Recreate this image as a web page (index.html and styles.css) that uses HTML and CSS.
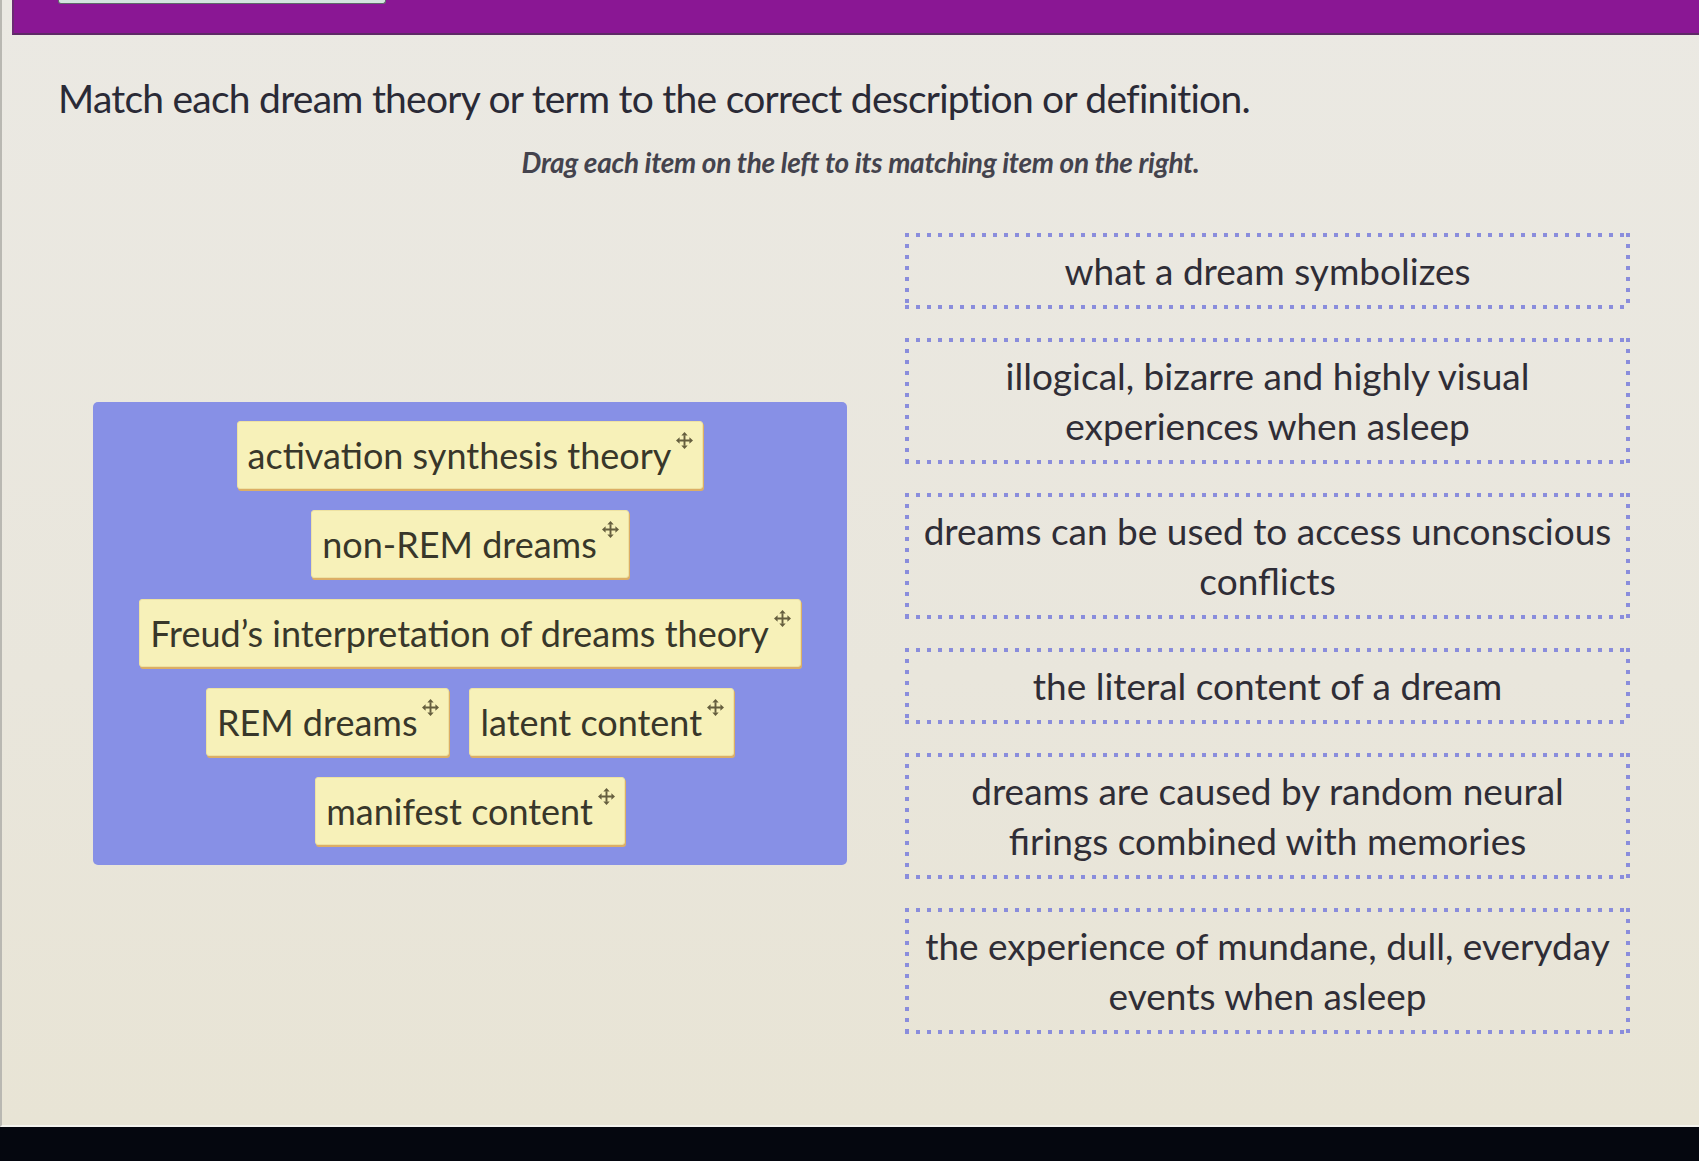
FILE: index.html
```html
<!DOCTYPE html>
<html lang="en">
<head>
    <meta charset="UTF-8" />
    <meta name="viewport" content="width=device-width, initial-scale=1.0" />
    <title>Dream Theories - Matching</title>
    <link rel="stylesheet" href="styles.css">
</head>
<body>
    <div class="screen">
        <header class="topbar"><span class="tab"></span></header>

        <main class="question">
            <h1 class="prompt">Match each dream theory or term to the correct description or definition.</h1>
            <p class="hint">Drag each item on the left to its matching item on the right.</p>

            <div class="matching">
                <div class="bank">
                    <div class="chip">activation synthesis theory<svg class="grip" viewBox="0 0 16 16"><path d="M8 3v10M3 8h10"/><path class="head" d="M8 0l3 3.4H5zM8 16l3-3.4H5zM0 8l3.4-3v6zM16 8l-3.4-3v6z"/></svg></div>
                    <div class="chip">non-REM dreams<svg class="grip" viewBox="0 0 16 16"><path d="M8 3v10M3 8h10"/><path class="head" d="M8 0l3 3.4H5zM8 16l3-3.4H5zM0 8l3.4-3v6zM16 8l-3.4-3v6z"/></svg></div>
                    <div class="chip">Freud’s interpretation of dreams theory<svg class="grip" viewBox="0 0 16 16"><path d="M8 3v10M3 8h10"/><path class="head" d="M8 0l3 3.4H5zM8 16l3-3.4H5zM0 8l3.4-3v6zM16 8l-3.4-3v6z"/></svg></div>
                    <div class="chip">REM dreams<svg class="grip" viewBox="0 0 16 16"><path d="M8 3v10M3 8h10"/><path class="head" d="M8 0l3 3.4H5zM8 16l3-3.4H5zM0 8l3.4-3v6zM16 8l-3.4-3v6z"/></svg></div>
                    <div class="chip">latent content<svg class="grip" viewBox="0 0 16 16"><path d="M8 3v10M3 8h10"/><path class="head" d="M8 0l3 3.4H5zM8 16l3-3.4H5zM0 8l3.4-3v6zM16 8l-3.4-3v6z"/></svg></div>
                    <div class="chip">manifest content<svg class="grip" viewBox="0 0 16 16"><path d="M8 3v10M3 8h10"/><path class="head" d="M8 0l3 3.4H5zM8 16l3-3.4H5zM0 8l3.4-3v6zM16 8l-3.4-3v6z"/></svg></div>
                </div>

                <ul class="targets">
                    <li class="target">what a dream symbolizes</li>
                    <li class="target">illogical, bizarre and highly visual experiences when asleep</li>
                    <li class="target">dreams can be used to access unconscious conflicts</li>
                    <li class="target">the literal content of a dream</li>
                    <li class="target">dreams are caused by random neural firings combined with memories</li>
                    <li class="target">the experience of mundane, dull, everyday events when asleep</li>
                </ul>
            </div>
        </main>
    </div>
    <div class="bezel"></div>
</body>
</html>
```

FILE: styles.css
```css
body {
    margin: 0;
    padding: 0;
    font-family: Lato, "Open Sans", sans-serif;
    background-color: #05070f;
    color: #2c2b35;
}

.screen {
    height: 1127px;
    background: linear-gradient(180deg, #ebe9e3 0%, #e9e6dc 60%, #e8e4d5 100%);
    border-left: 2px solid #b9b8b2;
    border-bottom: 2px solid #f4f3ee;
    box-sizing: border-box;
    overflow: hidden;
}

.topbar {
    position: relative;
    height: 33px;
    margin-left: 10px;
    background-color: #8a1794;
    border-bottom: 2px solid #5e2a66;
    border-left: 2px solid #6c2a74;
}
.tab {
    position: absolute;
    top: 0;
    left: 44px;
    width: 326px;
    height: 3px;
    background-color: #d4e5df;
    border: 1px solid #5f6a6a;
    border-top: none;
    border-radius: 0 0 3px 3px;
}

.question {
    padding: 0 56px;
}

.prompt {
    margin: 39px 0 0;
    font-size: 39px;
    font-weight: 400;
    line-height: 48px;
    letter-spacing: -0.75px;
    color: #2a2a36;
}

.hint {
    margin: 24px 0 0 20px;
    text-align: center;
    font-size: 28px;
    line-height: 32px;
    font-weight: 700;
    font-style: italic;
    letter-spacing: -0.3px;
    color: #44434d;
}

.matching {
    display: grid;
    grid-template-columns: 754px 725px;
    column-gap: 58px;
    align-items: center;
    margin: 55px 0 0 35px;
}

/* left bank of draggable chips */
.bank {
    display: flex;
    flex-wrap: wrap;
    justify-content: center;
    gap: 21px 20px;
    padding: 19px 40px 20px;
    background-color: #8790e6;
    border-radius: 5px;
}

.chip {
    display: inline-flex;
    align-items: flex-start;
    padding: 9px 9px 9px 10px;
    font-size: 36px;
    line-height: 48px;
    color: #38372a;
    background-color: #f7f1b9;
    border: 1px solid #eee2a2;
    border-radius: 3px;
    box-shadow: 1px 2px 0 #dcae66;
    cursor: move;
}
.grip {
    width: 17px;
    height: 17px;
    margin: 1px 0 0 5px;
    flex-shrink: 0;
}
.grip path {
    stroke: #655e3e;
    stroke-width: 1.8;
    fill: none;
}
.grip path.head {
    stroke: none;
    fill: #655e3e;
}

/* right column of drop targets */
.targets {
    list-style: none;
    margin: 0;
    padding: 0;
    display: flex;
    flex-direction: column;
    gap: 29px;
}

.target {
    padding: 13px 16px;
    text-align: center;
    font-size: 37px;
    line-height: 50px;
    color: #2f2d36;
    background:
        repeating-linear-gradient(90deg, #8a8ddc 0 4px, transparent 4px 11px) top left / 100% 4px no-repeat,
        repeating-linear-gradient(90deg, #8a8ddc 0 4px, transparent 4px 11px) bottom left / 100% 4px no-repeat,
        repeating-linear-gradient(180deg, #8a8ddc 0 4px, transparent 4px 11px) top left / 4px 100% no-repeat,
        repeating-linear-gradient(180deg, #8a8ddc 0 4px, transparent 4px 11px) top right / 4px 100% no-repeat;
}

.bezel {
    height: 34px;
    background-color: #05070f;
}
```
